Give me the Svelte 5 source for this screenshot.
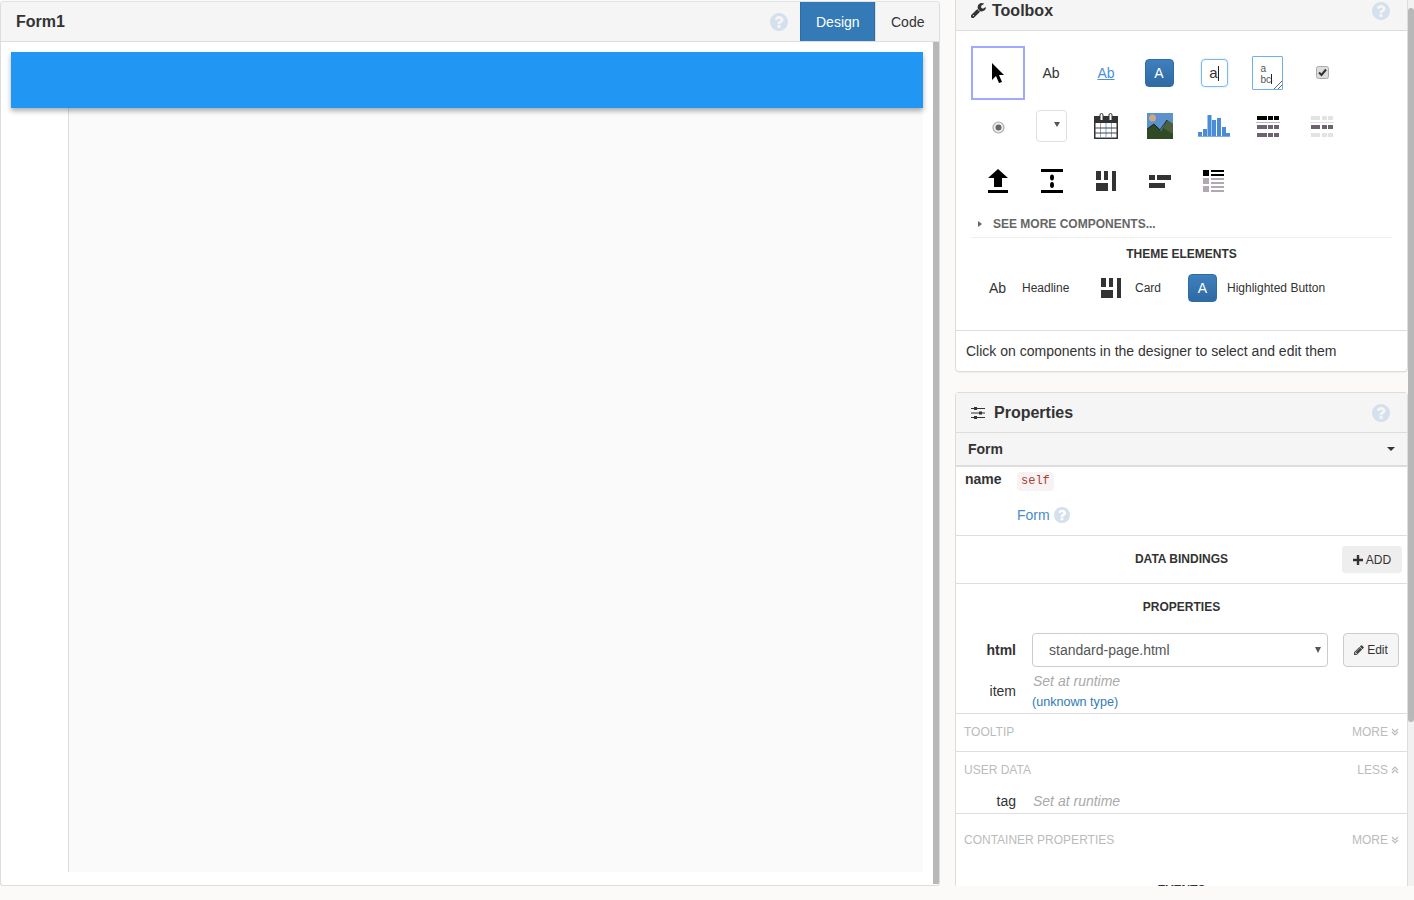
<script>
  const headlineFont = 14;
</script>

{#snippet help(size)}
  <svg class="help" width={size} height={size} viewBox="128 128 1536 1536" aria-hidden="true"><path fill="currentColor" d="M1024 1376v-192q0-14-9-23t-23-9h-192q-14 0-23 9t-9 23v192q0 14 9 23t23 9h192q14 0 23-9t9-23zm256-672q0-88-55.5-163t-138.5-116-170-41q-243 0-371 213-15 24 8 42l132 100q7 6 19 6 16 0 25-12 53-68 86-92 34-24 86-24 48 0 85.5 26t37.5 59q0 38-20 61t-68 45q-63 28-115.5 86.5t-52.5 125.5v36q0 14 9 23t23 9h192q14 0 23-9t9-23q0-19 21.5-49.5t54.5-49.5q32-18 49-28.5t46-35 44.5-48 28-60.5 12.5-81zm384 192q0 209-103 385.5t-279.5 279.5-385.5 103-385.5-103-279.5-279.5-103-385.5 103-385.5 279.5-279.5 385.5-103 385.5 103 279.5 279.5 103 385.5z"/></svg>
{/snippet}

{#snippet cardIcon()}
  <svg width="20" height="20" viewBox="0 0 20 20" aria-hidden="true">
    <g fill="#333">
      <rect x="0" y="0" width="5" height="9"/><rect x="8" y="0" width="4" height="9"/>
      <rect x="0" y="12" width="12" height="8"/><rect x="16" y="0" width="4" height="20"/>
    </g>
  </svg>
{/snippet}

{#snippet chevrons(up)}
  <svg class="chev" width="8" height="8" viewBox="0 0 8 8" aria-hidden="true">
    <g fill="none" stroke="#bbb" stroke-width="1.2">
      {#if up}
        <path d="M1 4 L4 1 L7 4"/><path d="M1 7 L4 4 L7 7"/>
      {:else}
        <path d="M1 1 L4 4 L7 1"/><path d="M1 4 L4 7 L7 4"/>
      {/if}
    </g>
  </svg>
{/snippet}

<div class="page">
  <section class="designer">
    <header class="designer-head">
      <h1>Form1</h1>
      <span class="head-help">{@render help(18)}</span>
      <button class="tab active">Design</button>
      <button class="tab">Code</button>
    </header>
    <div class="designer-body">
      <div class="canvas-wrap">
        <div class="canvas">
          <div class="bluebar"></div>
          <div class="canvas-main">
            <div class="gutter"></div>
            <div class="surface"></div>
          </div>
        </div>
      </div>
      <div class="inner-scroll"></div>
    </div>
  </section>

  <div class="side">
    <div class="side-content">
      <section class="panel toolbox">
        <header class="panel-head">
          <svg class="wrench" width="15" height="15" viewBox="128 128 1600 1600" aria-hidden="true"><path fill="#333" d="M448 1472q0-26-19-45t-45-19-45 19-19 45 19 45 45 19 45-19 19-45zm644-420l-682 682q-37 37-90 37-52 0-91-37l-106-108q-38-36-38-90 0-53 38-91l681-681q39 98 114.5 173.5t173.5 114.5zm634-435q0 39-23 106-47 134-164.5 217.5t-258.5 83.5q-185 0-316.5-131.5t-131.5-316.5 131.5-316.5 316.5-131.5q58 0 121.5 16.5t107.5 46.5q16 11 16 28t-16 28l-293 169v224l193 107q5-3 79-48.5t135.5-81 70.5-35.5q15 0 23.5 10t8.5 25z"/></svg>
          <h2 class="toolbox-title">Toolbox</h2>
          <span class="panel-help">{@render help(18)}</span>
        </header>
        <div class="tool-grid">
          <div class="tool selected">
            <svg width="14" height="22" viewBox="0 0 14 22" aria-hidden="true"><path fill="#000" d="M1 1 V18 L5 14 L8 21 L11 20 L8 13 L13 13 Z"/></svg>
          </div>
          <div class="tool ab nudge">Ab</div>
          <div class="tool"><span class="ab-link">Ab</span></div>
          <div class="tool nudge"><span class="btn-a">A</span></div>
          <div class="tool"><span class="mini-input">a<i></i></span></div>
          <div class="tool nudge">
            <span class="mini-area"><span>a</span><span>bc<i></i></span>
              <svg class="grip" width="8" height="8" viewBox="0 0 8 8" aria-hidden="true"><path d="M0 8 L8 0 M4 8 L8 4" stroke="#666" fill="none"/></svg>
            </span>
          </div>
          <div class="tool up">
            <svg width="13" height="13" viewBox="0 0 13 13" aria-hidden="true"><rect x=".5" y=".5" width="12" height="12" rx="2" fill="#ddd" stroke="#aaa"/><path d="M3 6.5 L5.5 9 L10 3.5" fill="none" stroke="#333" stroke-width="2"/></svg>
          </div>

          <div class="tool">
            <svg width="13" height="13" viewBox="0 0 13 13" aria-hidden="true"><circle cx="6.5" cy="6.5" r="5.5" fill="#eee" stroke="#aaa" stroke-width="1.2"/><circle cx="6.5" cy="6.5" r="3" fill="#666"/></svg>
          </div>
          <div class="tool up nudge"><span class="mini-select"></span></div>
          <div class="tool up">
            <svg width="24" height="26" viewBox="0 0 24 26" aria-hidden="true">
              <rect x=".75" y="3.75" width="22.5" height="21.5" fill="#fff" stroke="#333" stroke-width="1.5"/>
              <rect x="0" y="3" width="24" height="7" fill="#333"/>
              <path d="M6 7 V2 Q6 .5 7.5 .5 Q9 .5 9 2 V7 M15 7 V2 Q15 .5 16.5 .5 Q18 .5 18 2 V7" fill="#fff" stroke="#333"/>
              <path d="M6.5 10 V25 M12 10 V25 M17.5 10 V25" stroke="#8aa4c4" stroke-width="1"/>
              <path d="M1 15 H23 M1 20 H23" stroke="#444" stroke-width="1"/>
            </svg>
          </div>
          <div class="tool up">
            <svg width="26" height="26" viewBox="0 0 26 26" aria-hidden="true">
              <rect width="26" height="26" fill="#5b92cc"/>
              <circle cx="5.5" cy="5" r="3.5" fill="#c9a987"/>
              <path d="M0 16 L7 11 L14 18 L20 7 L26 11 V26 H0 Z" fill="#2f4a25"/>
              <path d="M20 7 L26 11 V21 L16 15 Z" fill="#4c5f40"/>
              <path d="M0 16 L7 11 L13 17 L20 7" fill="none" stroke="#111" stroke-width=".8"/>
            </svg>
          </div>
          <div class="tool up">
            <svg width="32" height="22" viewBox="0 0 32 22" aria-hidden="true">
              <g fill="#4a8cd8">
                <rect x="0" y="17" width="4" height="4"/><rect x="5" y="14" width="4" height="7"/>
                <rect x="9.500" y="0" width="4" height="21"/><rect x="14" y="5" width="4" height="16"/>
                <rect x="19" y="3" width="4" height="18"/><rect x="24" y="12" width="4" height="9"/>
                <rect x="28" y="18" width="4" height="3"/><rect x="0" y="21" width="32" height="1" opacity=".7"/>
              </g>
            </svg>
          </div>
          <div class="tool up">
            <svg width="24" height="21" viewBox="0 0 24 21" aria-hidden="true">
              <rect x="1" y="0" width="10" height="4" fill="#000"/><rect x="12" y="0" width="5" height="4" fill="#000"/><rect x="18" y="0" width="5" height="4" fill="#000"/>
              <rect x="0" y="6" width="24" height="1" fill="#bbb"/>
              <g fill="#6d6270">
                <rect x="1" y="9" width="10" height="4"/><rect x="12" y="9" width="5" height="4"/><rect x="18" y="9" width="5" height="4"/>
                <rect x="1" y="17" width="10" height="4"/><rect x="12" y="17" width="5" height="4"/><rect x="18" y="17" width="5" height="4"/>
              </g>
            </svg>
          </div>
          <div class="tool up">
            <svg width="24" height="21" viewBox="0 0 24 21" aria-hidden="true">
              <g fill="#e3e3e3">
                <rect x="1" y="0" width="9" height="4"/><rect x="12" y="0" width="5" height="4"/><rect x="18" y="0" width="5" height="4"/>
                <rect x="0" y="6" width="24" height="1"/>
                <rect x="1" y="17" width="9" height="4"/><rect x="12" y="17" width="5" height="4"/><rect x="18" y="17" width="5" height="4"/>
              </g>
              <g fill="#6d6270"><rect x="1" y="9" width="9" height="4"/><rect x="12" y="9" width="5" height="4"/><rect x="18" y="9" width="5" height="4"/></g>
            </svg>
          </div>

          <div class="tool">
            <svg width="20" height="24" viewBox="0 0 20 24" aria-hidden="true"><path fill="#000" d="M10 0 L20 9 H14 V18 H6 V9 H0 Z"/><rect x="0" y="21" width="20" height="3" fill="#000"/></svg>
          </div>
          <div class="tool">
            <svg width="22" height="24" viewBox="0 0 22 24" aria-hidden="true"><g fill="#000"><rect width="22" height="3"/><rect y="21" width="22" height="3"/><ellipse cx="11" cy="8.500" rx="2" ry="3"/><ellipse cx="11" cy="16" rx="2" ry="3"/></g></svg>
          </div>
          <div class="tool">{@render cardIcon()}</div>
          <div class="tool">
            <svg width="22" height="13" viewBox="0 0 22 13" aria-hidden="true"><g fill="#333"><rect width="6" height="5"/><rect x="8" width="14" height="5"/><rect y="8" width="16" height="5"/></g></svg>
          </div>
          <div class="tool nudge">
            <svg width="21" height="22" viewBox="0 0 21 22" aria-hidden="true">
              <rect width="6" height="6" fill="#000"/><rect x="8" y="0" width="13" height="2" fill="#000"/><rect x="8" y="4" width="13" height="2" fill="#000"/>
              <g fill="#b0a9b3">
                <rect y="8" width="6" height="6"/><rect x="8" y="8" width="13" height="2"/><rect x="8" y="12" width="13" height="2"/>
                <rect y="16" width="6" height="6"/><rect x="8" y="16" width="13" height="2"/><rect x="8" y="20" width="13" height="2"/>
              </g>
            </svg>
          </div>
        </div>

        <div class="see-more"><span class="tri-right"></span>SEE MORE COMPONENTS...</div>
        <div class="theme-title">THEME ELEMENTS</div>
        <div class="theme-row">
          <span class="theme-ab" style:font-size="{headlineFont}px">Ab</span><span class="theme-label headline">Headline</span>
          <span class="theme-card">{@render cardIcon()}</span><span class="theme-label card">Card</span>
          <span class="btn-a"><span>A</span></span><span class="theme-label">Highlighted Button</span>
        </div>
        <div class="toolbox-foot">Click on components in the designer to select and edit them</div>
      </section>

      <section class="panel props">
        <header class="panel-head props-head">
          <svg class="sliders" width="14" height="12" viewBox="0 0 14 12" aria-hidden="true">
            <g fill="#333"><rect y="1" width="14" height="1"/><rect y="5.500" width="14" height="1"/><rect y="10" width="14" height="1"/>
            <rect x="3" y="0" width="3" height="3"/><rect x="8" y="4.500" width="3" height="3"/><rect x="3" y="9" width="3" height="3"/></g>
          </svg>
          <h2>Properties</h2>
          <span class="panel-help">{@render help(18)}</span>
        </header>
        <div class="sub-head"><span>Form</span><i class="caret"></i></div>

        <div class="name-row"><b>name</b><code>self</code></div>
        <div class="type-row"><span>Form</span>{@render help(16)}</div>

        <div class="sec bindings"><span class="sec-title">DATA BINDINGS</span>
          <button class="add"><svg width="10" height="10" viewBox="0 0 10 10" aria-hidden="true"><path d="M3.800 0h2.400v3.800H10v2.400H6.200V10H3.800V6.200H0V3.800h3.800z" fill="#333"/></svg>ADD</button>
        </div>
        <div class="sec props-title"><span class="sec-title">PROPERTIES</span></div>

        <div class="html-row">
          <label for="html-select">html</label>
          <div class="fake-select" id="html-select">standard-page.html<i></i></div>
          <button class="edit"><svg width="10" height="10" viewBox="128 128 1536 1536" aria-hidden="true"><path fill="#444" d="M491 1536l91-91-235-235-91 91v107h128v128h107zm523-928q0-22-22-22-10 0-17 7l-542 542q-7 7-7 17 0 22 22 22 10 0 17-7l542-542q7-7 7-17zm-54-192l416 416-832 832h-416v-416zm683 96q0 53-37 90l-166 166-416-416 166-165q36-38 90-38 53 0 91 38l235 234q37 39 37 91z"/></svg>Edit</button>
        </div>
        <div class="item-row">
          <span class="prop-label">item</span>
          <div><div class="runtime">Set at runtime</div><div class="unknown">(unknown type)</div></div>
        </div>

        <div class="fold tooltip"><span>TOOLTIP</span><span>MORE {@render chevrons(false)}</span></div>
        <div class="fold userdata"><span>USER DATA</span><span>LESS {@render chevrons(true)}</span></div>
        <div class="tag-row"><span class="prop-label">tag</span><span class="runtime">Set at runtime</span></div>
        <div class="fold container"><span>CONTAINER PROPERTIES</span><span>MORE {@render chevrons(false)}</span></div>
        <div class="events">EVENTS</div>
      </section>
    </div>
    <div class="page-scroll"><div class="page-thumb"></div></div>
  </div>
</div>

<style>
  :global(body) {
    margin: 0;
    background: #fbfaf8;
    overflow: hidden;
  }
  .page {
    display: flex;
    align-items: flex-start;
    height: 886px;
    overflow: hidden;
    font: 14px/20px "Liberation Sans", Arial, sans-serif;
    color: #333;
  }
  h1, h2 { margin: 0; font-weight: 700; font-size: 16px; line-height: 20px; color: #333; }
  button { font-family: inherit; cursor: pointer; }

  /* designer */
  .designer {
    box-sizing: border-box;
    width: 940px;
    height: 885px;
    margin-top: 1px;
    background: #fff;
    border: 1px solid #ddd;
    border-top-color: #e3e3e3;
    border-radius: 4px;
    box-shadow: 0 1px 1px rgba(0,0,0,.05);
    display: flex;
    flex-direction: column;
    overflow: hidden;
  }
  .designer-head {
    flex: none;
    box-sizing: border-box;
    height: 40px;
    display: flex;
    align-items: stretch;
    background: #f5f5f5;
    border-bottom: 1px solid #ddd;
  }
  .designer-head h1 { align-self: center; margin-left: 15px; flex: 1; }
  .head-help { align-self: center; display: flex; margin-right: 12px; }
  .help { color: #d4e0ed; flex: none; }
  .tab {
    border: 0;
    background: #f5f5f5;
    color: #333;
    font-size: 14px;
    padding: 0 15px 0 15px;
    width: 64px;
    border-left: 1px solid #ddd;
  }
  .tab.active { width: 75px; background: #337ab7; color: #fff; border: 1px solid #2e6da4; border-width: 0 1px; }
  .designer-body { flex: 1; display: flex; min-height: 0; }
  .canvas-wrap { flex: 1; padding: 10px 10px 13px 10px; display: flex; min-width: 0; }
  .canvas { flex: 1; display: flex; flex-direction: column; }
  .bluebar {
    flex: none;
    height: 56px;
    background: #2196f3;
    box-shadow: 0 3px 5px rgba(0,0,0,.32);
    position: relative;
  }
  .canvas-main { flex: 1; display: flex; }
  .gutter { width: 57px; border-right: 1px solid #ddd; background: #fff; }
  .surface { flex: 1; background: #fafafa; }
  .inner-scroll { flex: none; width: 6px; margin-bottom: 1px; background: #b8b8b8; }

  /* right column */
  .side {
    width: 459px;
    margin-left: 15px;
    height: 886px;
    flex: none;
    display: flex;
    overflow: hidden;
  }
  .side-content { width: 453px; flex: none; margin-top: -10px; }
  .page-scroll { width: 6px; flex: none; height: 886px; background: #f1f1f1; }
  .page-thumb { margin-top: 8px; height: 714px; background: #b8b8b8; border-radius: 3px; }

  .panel {
    box-sizing: border-box;
    background: #fff;
    border: 1px solid #ddd;
    border-radius: 4px;
    box-shadow: 0 1px 1px rgba(0,0,0,.05);
  }
  .panel-head {
    box-sizing: border-box;
    height: 40px;
    display: flex;
    align-items: center;
    background: #f5f5f5;
    border-bottom: 1px solid #ddd;
    padding: 0 17px 0 15px;
  }
  .panel-head h2 { flex: 1; }
  .toolbox-title { margin-left: 6px; }
  .wrench { flex: none; }
  .panel-help { display: flex; }

  .tool-grid {
    display: grid;
    grid-template-columns: repeat(7, 54px);
    grid-auto-rows: 54px;
    padding: 15px 0 0 15px;
  }
  .tool {
    box-sizing: border-box;
    display: flex;
    align-items: center;
    justify-content: center;
    font-size: 14px;
    color: #333;
  }
  .tool.up { padding-bottom: 2px; }
  .tool.nudge { padding-right: 2px; }
  .tool.selected { border: 2px solid #a0a8ff; }
  .ab-link { color: #4a90d9; text-decoration: underline; }
  .btn-a {
    box-sizing: border-box;
    display: flex;
    align-items: center;
    justify-content: center;
    width: 29px;
    height: 28px;
    border: 1px solid #2e6da4;
    border-radius: 4px;
    background: linear-gradient(#3e80bd, #2e6aa3);
    color: #fff;
    font-size: 14px;
    flex: none;
  }
  .mini-input {
    box-sizing: border-box;
    width: 27px;
    height: 28px;
    border: 1px solid #7bb8ee;
    border-radius: 4px;
    display: flex;
    align-items: center;
    justify-content: center;
    font-size: 15px;
    box-shadow: 0 0 2px rgba(102,175,233,.5);
  }
  .mini-input i { display: inline-block; width: 1px; height: 15px; background: #222; }
  .mini-area {
    position: relative;
    box-sizing: border-box;
    width: 31px;
    height: 34px;
    border: 1px solid #6cb0ee;
    border-radius: 1px;
    padding: 6px 0 0 8px;
    display: flex;
    flex-direction: column;
    font-size: 10px;
    line-height: 11px;
    color: #555;
  }
  .mini-area i { display: inline-block; width: 1px; height: 10px; background: #222; vertical-align: -1px; }
  .grip { position: absolute; right: 0; bottom: 0; }
  .mini-select {
    position: relative;
    box-sizing: border-box;
    width: 31px;
    height: 32px;
    border: 1px solid #e0e0e0;
    border-radius: 4px;
  }
  .mini-select::after {
    content: "";
    position: absolute;
    left: 17px;
    top: 11px;
    border: 3px solid transparent;
    border-width: 5px 3px 0;
    border-top-color: #555;
  }

  .see-more {
    margin: 0 15px;
    height: 30px;
    box-sizing: border-box;
    border-bottom: 1px solid #eee;
    padding: 6px 0 0 22px;
    position: relative;
    font-size: 12px;
    font-weight: 700;
    color: #666;
    line-height: 20px;
  }
  .tri-right {
    position: absolute;
    left: 7px;
    top: 13px;
    border-style: solid;
    border-width: 3px 0 3px 4px;
    border-color: transparent transparent transparent #666;
  }
  .theme-title {
    text-align: center;
    font-size: 12px;
    font-weight: 700;
    line-height: 20px;
    margin-top: 6px;
  }
  .theme-row {
    height: 66px;
    box-sizing: border-box;
    padding: 10px 0 0 33px;
    display: flex;
    align-items: flex-start;
    font-size: 12px;
    line-height: 28px;
  }
  .theme-ab { width: 33px; flex: none; }
  .theme-label.headline { width: 79px; flex: none; }
  .theme-card { height: 28px; display: flex; align-items: center; width: 34px; flex: none; }
  .theme-label.card { width: 53px; flex: none; }
  .btn-a + .theme-label { margin-left: 10px; }
  .toolbox-foot {
    border-top: 1px solid #ddd;
    padding: 10px;
    height: 41px;
    box-sizing: border-box;
    line-height: 20px;
  }

  /* properties */
  .props { margin-top: 20px; border-bottom: 0; border-radius: 4px 4px 0 0; }
  .props-head { padding-left: 15px; height: 40px; }
  .props-head h2 { margin-left: 9px; }
  .sliders { flex: none; }
  .sub-head {
    box-sizing: border-box;
    height: 34px;
    background: #f5f5f5;
    border-bottom: 2px solid #ddd;
    display: flex;
    align-items: center;
    justify-content: space-between;
    padding: 0 12px 0 12px;
    font-weight: 700;
  }
  .caret {
    border-style: solid;
    border-width: 4px 4px 0;
    border-color: #333 transparent transparent;
  }
  .name-row {
    height: 25px;
    display: flex;
    align-items: center;
    padding: 0 0 0 9px;
  }
  .name-row b { width: 52px; flex: none; margin-top: -2px; }
  code {
    font: 12px/19px "Liberation Mono", monospace;
    color: #a8432f;
    background: #f9f2f4;
    border-radius: 4px;
    padding: 0 4px;
    margin-top: 3px;
  }
  .type-row {
    height: 44px;
    display: flex;
    align-items: center;
    gap: 4px;
    padding: 2px 0 0 61px;
    box-sizing: border-box;
    color: #4a8cc8;
    border-bottom: 1px solid #ddd;
  }
  .sec {
    position: relative;
    box-sizing: border-box;
    height: 48px;
    border-bottom: 1px solid #ddd;
    display: flex;
    align-items: center;
    justify-content: center;
    padding-bottom: 2px;
  }
  .sec-title { font-size: 12px; font-weight: 700; }
  .props-title { border-bottom: 0; height: 49px; padding-bottom: 4px; }
  .add {
    position: absolute;
    right: 5px;
    top: 10px;
    height: 27px;
    width: 60px;
    border: 0;
    border-radius: 3px;
    background: #eee;
    color: #333;
    font-size: 12px;
    display: flex;
    align-items: center;
    justify-content: center;
    gap: 3px;
    padding: 0;
  }
  .html-row {
    display: flex;
    align-items: center;
    height: 34px;
  }
  .html-row label, .prop-label {
    width: 60px;
    flex: none;
    text-align: right;
    margin-right: 16px;
  }
  .html-row label { font-weight: 700; }
  .fake-select {
    position: relative;
    box-sizing: border-box;
    width: 296px;
    height: 34px;
    line-height: 32px;
    border: 1px solid #ccc;
    border-radius: 4px;
    padding-left: 16px;
    color: #555;
    flex: none;
  }
  .fake-select i {
    position: absolute;
    right: 6px;
    top: 13px;
    border-style: solid;
    border-width: 6px 3.5px 0;
    border-color: #555 transparent transparent;
  }
  .edit {
    margin-left: 15px;
    box-sizing: border-box;
    width: 56px;
    height: 34px;
    border: 1px solid #ccc;
    border-radius: 4px;
    background: #f5f5f5;
    color: #333;
    font-size: 12px;
    display: flex;
    align-items: center;
    justify-content: center;
    gap: 3px;
    padding: 0;
  }
  .item-row {
    box-sizing: border-box;
    height: 47px;
    display: flex;
    align-items: center;
    border-bottom: 1px solid #ddd;
    padding-top: 2px;
  }
  .runtime { font-style: italic; color: #aaa; line-height: 20px; margin-left: 1px; }
  .unknown { font-size: 12.6px; color: #337ab7; line-height: 20px; margin-top: 1px; }
  .fold {
    box-sizing: border-box;
    display: flex;
    justify-content: space-between;
    align-items: center;
    padding: 0 8px 2px 8px;
    font-size: 12px;
    color: #bbb;
    height: 38px;
  }
  .fold.tooltip { border-bottom: 1px solid #ddd; }
  .fold span { display: flex; align-items: center; gap: 3px; }
  .fold.container { height: 52px; padding-bottom: 0; }
  .tag-row {
    box-sizing: border-box;
    height: 24px;
    display: flex;
    align-items: center;
    border-bottom: 1px solid #ddd;
    padding-bottom: 1px;
  }
  .tag-row .runtime { margin-left: 1px; }
  .events {
    text-align: center;
    font-size: 12px;
    font-weight: 700;
    color: #333;
    margin-top: 14px;
    height: 40px;
  }
</style>
